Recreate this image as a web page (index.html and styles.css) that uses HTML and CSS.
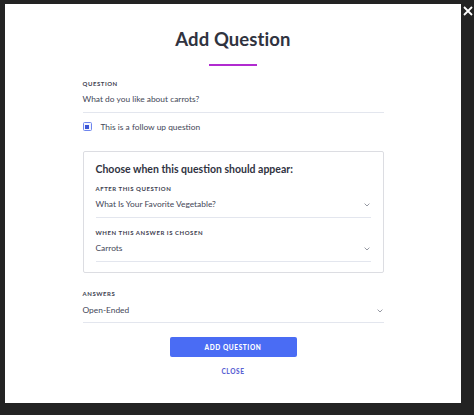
FILE: index.html
```html
<!DOCTYPE html>
<html>
<head>
<meta charset="utf-8">
<link rel="stylesheet" href="styles.css">
</head>
<body>
<div class="modal">
  <h1 class="title">Add Question</h1>
  <div class="accent"></div>
  <div class="form">
    <div class="field">
      <div class="label">Question</div>
      <div class="value">What do you like about carrots?</div>
    </div>
    <label class="check-row">
      <span class="checkbox"><span class="checkbox-dot"></span></span>
      <span class="check-text">This is a follow up question</span>
    </label>
    <div class="panel">
      <div class="panel-title">Choose when this question should appear:</div>
      <div class="field field-after">
        <div class="label">After this question</div>
        <div class="value select">What Is Your Favorite Vegetable?
          <svg class="chev" viewBox="0 0 6 4" width="6" height="4"><path d="M0.6 0.6 L3 3 L5.4 0.6" fill="none" stroke="#8a8d99" stroke-width="0.9"/></svg>
        </div>
      </div>
      <div class="field field-when">
        <div class="label">When this answer is chosen</div>
        <div class="value select">Carrots
          <svg class="chev" viewBox="0 0 6 4" width="6" height="4"><path d="M0.6 0.6 L3 3 L5.4 0.6" fill="none" stroke="#8a8d99" stroke-width="0.9"/></svg>
        </div>
      </div>
    </div>
    <div class="field field-answers">
      <div class="label">Answers</div>
      <div class="value select">Open-Ended
        <svg class="chev" viewBox="0 0 6 4" width="6" height="4"><path d="M0.6 0.6 L3 3 L5.4 0.6" fill="none" stroke="#8a8d99" stroke-width="0.9"/></svg>
      </div>
    </div>
    <div class="actions">
      <button class="btn-primary">Add Question</button>
      <a class="btn-link">Close</a>
    </div>
  </div>
</div>
<div class="close-x">
  <svg viewBox="0 0 10 10" width="10" height="10"><path d="M1 1 L9 9 M9 1 L1 9" stroke="#ffffff" stroke-width="1.8" fill="none"/></svg>
</div>
</body>
</html>
```
FILE: styles.css
```css
html, body {
  margin: 0;
  padding: 0;
}
body {
  background: #232323;
  width: 474px;
  height: 415px;
  overflow: hidden;
  position: relative;
  font-family: "Lato", "Liberation Sans", sans-serif;
  color: #424556;
}
.modal {
  margin: 4px 0 0 5px;
  width: 456px;
  height: 399px;
  background: #ffffff;
  display: flex;
  flex-direction: column;
  align-items: center;
  box-sizing: border-box;
  padding-top: 23px;
}
.title {
  margin: 0;
  font-size: 18.5px;
  line-height: 24px;
  font-weight: 700;
  color: #30333f;
  letter-spacing: 0.1px;
}
.accent {
  width: 48px;
  height: 2px;
  background: #b12bd0;
  margin-top: 13px;
}
.form {
  width: 301px;
  margin-top: 14px;
  display: flex;
  flex-direction: column;
}
.field {
  border-bottom: 1px solid #e3e6ee;
  display: flex;
  flex-direction: column;
}
.label {
  font-size: 6px;
  line-height: 8px;
  font-weight: 700;
  letter-spacing: 0.55px;
  text-transform: uppercase;
  color: #3e4150;
}
.value {
  font-size: 8.4px;
  line-height: 12px;
  margin-top: 5px;
  padding-bottom: 7px;
  color: #444757;
}
.select {
  display: flex;
  justify-content: space-between;
  align-items: center;
}
.chev {
  margin-right: 1px;
  margin-top: 2px;
}
.check-row {
  display: flex;
  align-items: center;
  margin-top: 9px;
  height: 9px;
}
.checkbox {
  width: 9px;
  height: 9px;
  box-sizing: border-box;
  border: 1px solid #6f86ee;
  border-radius: 1.5px;
  display: flex;
  align-items: center;
  justify-content: center;
  background: #f3f5fe;
}
.checkbox-dot {
  width: 4px;
  height: 4px;
  background: #3a55d6;
}
.check-text {
  margin-left: 9px;
  font-size: 8.4px;
  line-height: 12px;
  color: #444757;
}
.panel {
  margin-top: 20px;
  border: 1px solid #dcdde2;
  border-radius: 2px;
  padding: 10px 12px 10px 12px;
  display: flex;
  flex-direction: column;
}
.panel-title {
  font-size: 10.5px;
  line-height: 14px;
  font-weight: 700;
  color: #30333f;
}
.field-after {
  margin-top: 9px;
}
.field-when {
  margin-top: 11px;
}
.field-answers {
  margin-top: 17px;
}
.field-answers .value {
  margin-top: 6px;
  padding-bottom: 6px;
}
.actions {
  display: flex;
  flex-direction: column;
  align-items: center;
  margin-top: 14px;
}
.btn-primary {
  width: 127px;
  height: 20px;
  border: none;
  border-radius: 2px;
  background: #4a6cf4;
  color: #ffffff;
  font-family: "Lato", "Liberation Sans", sans-serif;
  font-size: 6.5px;
  font-weight: 900;
  letter-spacing: 0.6px;
  text-transform: uppercase;
  padding: 0;
}
.btn-link {
  margin-top: 11px;
  font-size: 6.5px;
  line-height: 8px;
  font-weight: 900;
  letter-spacing: 0.6px;
  text-transform: uppercase;
  color: #5b62d3;
}
.close-x {
  position: absolute;
  left: 463px;
  top: 6px;
  width: 10px;
  height: 10px;
}
.close-x svg {
  display: block;
}
```
